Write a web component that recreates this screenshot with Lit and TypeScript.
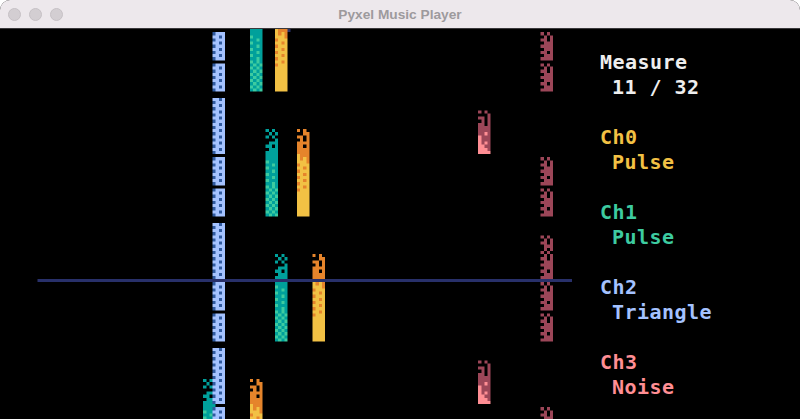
import { LitElement, html, css } from 'lit';
import { customElement, query } from 'lit/decorators.js';

// palette as it shows in the screenshot, by the letter used in the bitmaps below
const COLORS: Record<string, string> = {
  o: '#e5842b',
  y: '#f2c144',
  t: '#00a09b',
  g: '#3dcba0',
  d: '#9c4658',
  l: '#ff8e94',
  b: '#a4c2ff',
  s: '#2f5aa0',
  n: '#28306a',
};

const LEAD = [
  'o.o.', '..oo', 'oo.o', '.o.o', 'oooo', 'oo.o', 'oooo', 'oooo',
  'yooo', 'yoyo', 'yyyo', 'oyyy', 'yyoy', 'oyyy', 'yyoy', 'oyyy',
  'yyoy', 'oyyy', 'yyoy', 'oyyy', 'yyyy', 'yyyy', 'yyyy', 'yyyy',
  'yyyy', 'yyyy', 'yyyy', 'yyyy',
];

const HARMONY = [
  't.t.', '.t.t', 't.t.', '...t', '.ttt', 'tt.t', '.ttt', 'tttt',
  'tttt', 'tttt', 'gttt', 'ttgt', 'gttt', 'ttgt', 'gttt', 'ttgt',
  'gttt', 'ttgt', 'gtgt', 'tgtg', 'gtgt', 'tgtg', 'gtgt', 'tgtg',
  'gtgt', 'tgtg', 'gtgt', 'tgtg',
];

const SNARE = [
  'd.d.', '...d', 'dd.d', '.d.d', 'dd.d', 'dddd', 'dddd', 'ddld',
  'lddd', 'lddd', 'ldld', 'lldd', 'llld', 'llll',
];

const HAT = ['d.d.', '.d.d', 'dd.d', '.ddd', 'dddd', '.ddd', 'dd.d', '.ddd', 'dddd'];
const HAT_OPEN = ['d.d.', '.d.d', 'dd.d', '.ddd', '.d.d'];

type Note = { col: number; row: number; bitmap: string[] };

const bass = (row: number, length: number): Note => ({
  col: 68,
  row,
  bitmap: Array.from({ length }, (_, i) => ((row + i) % 2 ? 'sbbb' : 'bbsb')),
});

const NOTES: Note[] = [
  { col: 65, row: 112, bitmap: HARMONY },
  { col: 80, row: -8, bitmap: HARMONY },
  { col: 85, row: 32, bitmap: HARMONY },
  { col: 88, row: 72, bitmap: HARMONY },
  { col: 88, row: -8, bitmap: LEAD },
  { col: 95, row: 32, bitmap: LEAD },
  { col: 100, row: 72, bitmap: LEAD },
  { col: 80, row: 112, bitmap: LEAD },
  bass(1, 9),
  bass(11, 9),
  bass(22, 18),
  bass(41, 9),
  bass(51, 9),
  bass(62, 18),
  bass(81, 9),
  bass(91, 9),
  bass(102, 18),
  bass(121, 9),
  { col: 153, row: 26, bitmap: SNARE },
  { col: 153, row: 106, bitmap: SNARE },
  { col: 173, row: 1, bitmap: HAT },
  { col: 173, row: 11, bitmap: HAT },
  { col: 173, row: 41, bitmap: HAT },
  { col: 173, row: 51, bitmap: HAT },
  { col: 173, row: 66, bitmap: HAT_OPEN },
  { col: 173, row: 71, bitmap: HAT },
  { col: 173, row: 81, bitmap: HAT },
  { col: 173, row: 91, bitmap: HAT },
  { col: 173, row: 121, bitmap: HAT },
  // playhead goes over the notes
  { col: 92, row: 0, bitmap: ['n'] },
  { col: 12, row: 80, bitmap: ['n'.repeat(171)] },
];

const CHANNELS = [
  { name: 'Ch0', wave: 'Pulse', cls: 'yellow' },
  { name: 'Ch1', wave: 'Pulse', cls: 'green' },
  { name: 'Ch2', wave: 'Triangle', cls: 'blue' },
  { name: 'Ch3', wave: 'Noise', cls: 'pink' },
];

// one game pixel in backing-store pixels; the canvas is shown at half size
const SCALE = 6.25;

@customElement('piano-roll')
export class PianoRoll extends LitElement {
  @query('canvas') private canvas!: HTMLCanvasElement;

  static styles = css`
    :host {
      display: block;
      flex: none;
      width: 600px;
      height: 390px;
    }
    canvas {
      display: block;
      width: 600px;
      height: 390px;
    }
  `;

  firstUpdated() {
    const ctx = this.canvas.getContext('2d')!;
    ctx.fillStyle = '#000';
    ctx.fillRect(0, 0, 1200, 780);
    for (const note of NOTES) {
      note.bitmap.forEach((line, y) => {
        [...line].forEach((c, x) => {
          if (c === '.') return;
          const x0 = Math.round((note.col + x) * SCALE);
          const y0 = Math.round((note.row + y) * SCALE);
          const x1 = Math.round((note.col + x + 1) * SCALE);
          const y1 = Math.round((note.row + y + 1) * SCALE);
          ctx.fillStyle = COLORS[c];
          ctx.fillRect(x0, y0, x1 - x0, y1 - y0);
        });
      });
    }
  }

  render() {
    return html`<canvas width="1200" height="780"></canvas>`;
  }
}

@customElement('app-root')
export class AppRoot extends LitElement {
  static styles = css`
    :host {
      display: block;
      width: 800px;
      height: 419px;
      overflow: hidden;
      background: #fff;
    }
    .window {
      height: 419px;
      border-radius: 10px 10px 0 0;
      overflow: hidden;
      background: #000;
    }
    .titlebar {
      position: relative;
      height: 28px;
      background: #ede8ec;
      border-bottom: 1px solid #3a383b;
      display: flex;
      align-items: center;
      justify-content: center;
      font: bold 13.7px 'Liberation Sans', sans-serif;
      color: #9d9a9d;
    }
    .lights {
      position: absolute;
      left: 8px;
      top: 8px;
      display: flex;
      gap: 8px;
    }
    .lights span {
      width: 11px;
      height: 11px;
      border-radius: 50%;
      background: #d3ced2;
      border: 1px solid #c6c1c5;
    }
    .body {
      display: flex;
      height: 390px;
    }
    .panel {
      display: flex;
      flex-direction: column;
      gap: 25px;
      padding-top: 21px;
      font: bold 20px/25px 'DejaVu Sans Mono', monospace;
      letter-spacing: 0.46px;
      white-space: pre;
    }
    .block {
      display: flex;
      flex-direction: column;
    }
    .sub {
      padding-left: 12px;
    }
    .white {
      color: #eeeeee;
    }
    .yellow {
      color: #f2c144;
    }
    .green {
      color: #3dcba0;
    }
    .blue {
      color: #a4c2ff;
    }
    .pink {
      color: #ff8e94;
    }
  `;

  render() {
    return html`
      <div class="window">
        <div class="titlebar">
          <div class="lights"><span></span><span></span><span></span></div>
          Pyxel Music Player
        </div>
        <div class="body">
          <piano-roll></piano-roll>
          <div class="panel">
            <div class="block white">
              <span>Measure</span>
              <span class="sub">11 / 32</span>
            </div>
            ${CHANNELS.map(
              (c) => html`
                <div class="block ${c.cls}">
                  <span>${c.name}</span>
                  <span class="sub">${c.wave}</span>
                </div>
              `
            )}
          </div>
        </div>
      </div>
    `;
  }
}
